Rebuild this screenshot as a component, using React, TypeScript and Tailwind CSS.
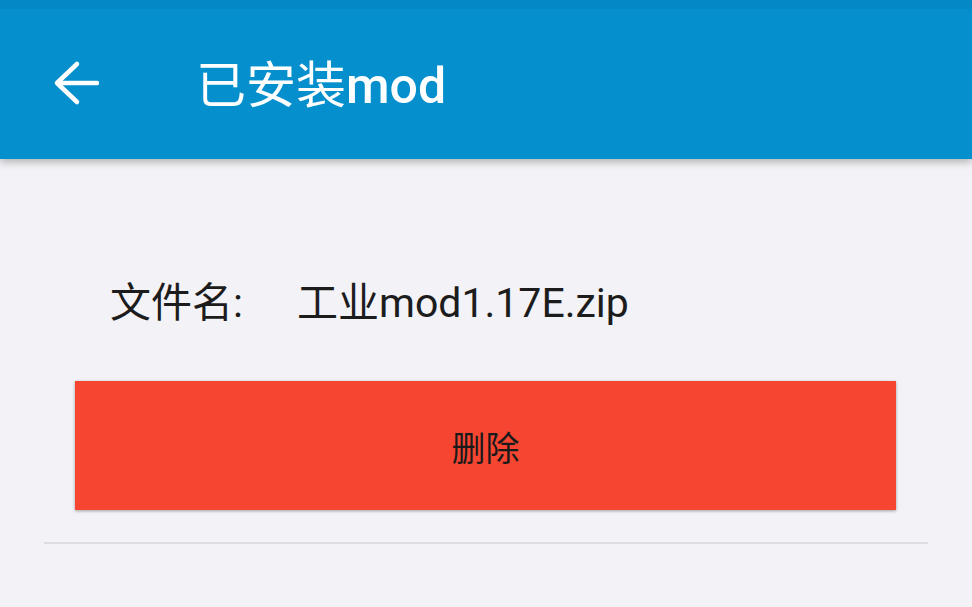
import React from "react";

export default function App() {
  const font = { fontFamily: 'Roboto, "Noto Sans CJK SC", sans-serif' };
  return (
    <div className="w-[972px] h-[607px] overflow-hidden bg-[#f3f2f6] flex flex-col" style={font}>
      <header className="relative z-10 h-[159px] bg-[#058fcd] shadow-[0_3px_8px_rgba(0,0,0,0.28)] flex flex-col">
        <div className="h-[9px] bg-[#0488c6]" />
        <div className="flex-1 flex items-center pb-[2px]">
          <div className="ml-[53px] w-[46px] h-[46px] flex items-center justify-center">
            <svg width="46" height="46" viewBox="0 0 46 46" fill="none">
              <path d="M44 23H5" stroke="white" strokeWidth="4.5" strokeLinecap="round" />
              <path d="M24 4L4 23L24 42" stroke="white" strokeWidth="4.5" strokeLinecap="round" strokeLinejoin="round" />
            </svg>
          </div>
          <h1 className="ml-[97px] text-[50px] leading-none text-white">
            <span className="font-normal" style={{ fontFamily: '"Noto Sans CJK SC", sans-serif' }}>已安装</span>
            <span className="font-medium">mod</span>
          </h1>
        </div>
      </header>
      <main className="flex flex-col">
        <div className="mt-[118px] ml-[110px] flex items-center h-[48px] text-[41px] leading-[48px] text-[#1c1c1c]">
          <span className="w-[187px] shrink-0">
            <span style={{ fontFamily: '"Noto Sans CJK SC", sans-serif' }}>文件名</span>:
          </span>
          <span>
            <span style={{ fontFamily: '"Noto Sans CJK SC", sans-serif' }}>工业</span>mod1.17E.zip
          </span>
        </div>
        <button className="mt-[56px] ml-[75px] w-[821px] h-[129px] bg-[#f64632] shadow-[0_1px_3px_rgba(0,0,0,0.35)] flex items-center justify-center">
          <span className="text-[34px] leading-none text-[#1a1a1a] pt-[3px]" style={{ fontFamily: '"Noto Sans CJK SC", sans-serif' }}>删除</span>
        </button>
        <div className="mt-[32px] ml-[44px] w-[884px] h-[2px] bg-[#dddce1]" />
      </main>
    </div>
  );
}
